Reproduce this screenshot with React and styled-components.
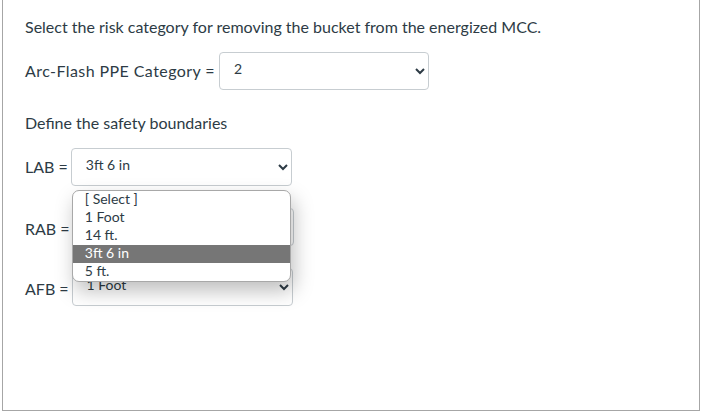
import styled, { createGlobalStyle } from "styled-components";

const GlobalStyle = createGlobalStyle`
  body {
    margin: 0;
    background: #fff;
    font-family: Lato, "Open Sans", sans-serif;
    color: #2d3b45;
  }
`;

const Panel = styled.div`
  box-sizing: border-box;
  margin-left: 2px;
  width: 698px;
  height: 411px;
  border: 1px solid #a6a6a6;
  border-top: none;
  padding: 15px 0 0 22px;
`;

const Text = styled.p`
  margin: 0;
  font-size: 16px;
  line-height: 24px;
  margin-top: ${(p) => p.$top || 0}px;
`;

const Row = styled.div`
  display: flex;
  align-items: center;
  margin-top: ${(p) => p.$top || 0}px;
`;

const Label = styled.span`
  font-size: 16px;
  line-height: 24px;
  letter-spacing: ${(p) => p.$spacing || 0}px;
  padding-top: ${(p) => p.$drop || 0}px;
  margin-right: ${(p) => p.$gap || 3}px;
  white-space: nowrap;
`;

const SelectWrap = styled.div`
  position: relative;
`;

const Select = styled.select`
  box-sizing: border-box;
  width: ${(p) => p.$w}px;
  height: 38px;
  border: 1px solid #c7cdd1;
  border-radius: 4px;
  background: #fff;
  font-family: Lato, "Open Sans", sans-serif;
  font-size: 14px;
  color: #2d3b45;
  padding: 0 0 5px 10px;
  outline: none;
`;

const List = styled.div`
  position: absolute;
  left: 1px;
  top: 42px;
  width: 219px;
  box-sizing: border-box;
  border: 1px solid #a8a8a8;
  border-radius: 7px;
  background: #fff;
  overflow: hidden;
  box-shadow: 3px 9px 20px rgba(0, 0, 0, 0.26);
  z-index: 5;
`;

const Option = styled.div`
  height: 18px;
  line-height: 16px;
  padding-left: 12px;
  font-size: 14px;
  color: ${(p) => (p.$active ? "#fff" : "#2d3b45")};
  background: ${(p) => (p.$active ? "#767676" : "transparent")};
`;

const options = ["[ Select ]", "1 Foot", "14 ft.", "3ft 6 in", "5 ft."];

export default function App() {
  return (
    <>
      <GlobalStyle />
      <Panel>
        <Text>Select the risk category for removing the bucket from the energized MCC.</Text>
        <Row $top={13}>
          <Label $gap={4} $spacing={0.42}>Arc-Flash PPE Category =</Label>
          <Select $w={210} defaultValue="2">
            <option>[ Select ]</option>
            <option>1</option>
            <option>2</option>
            <option>3</option>
            <option>4</option>
          </Select>
        </Row>
        <Text $top={21}>Define the safety boundaries</Text>
        <Row $top={13}>
          <Label>LAB =</Label>
          <SelectWrap>
            <Select $w={221} defaultValue="3ft 6 in">
              {options.map((o) => (
                <option key={o}>{o}</option>
              ))}
            </Select>
            <List>
              {options.map((o) => (
                <Option key={o} $active={o === "3ft 6 in"}>
                  {o}
                </Option>
              ))}
            </List>
          </SelectWrap>
        </Row>
        <Row $top={22}>
          <Label $drop={3}>RAB =</Label>
          <Select $w={221} defaultValue="1 Foot">
            {options.map((o) => (
              <option key={o}>{o}</option>
            ))}
          </Select>
        </Row>
        <Row $top={22}>
          <Label $drop={4}>AFB =</Label>
          <Select $w={221} defaultValue="1 Foot">
            {options.map((o) => (
              <option key={o}>{o}</option>
            ))}
          </Select>
        </Row>
      </Panel>
    </>
  );
}
